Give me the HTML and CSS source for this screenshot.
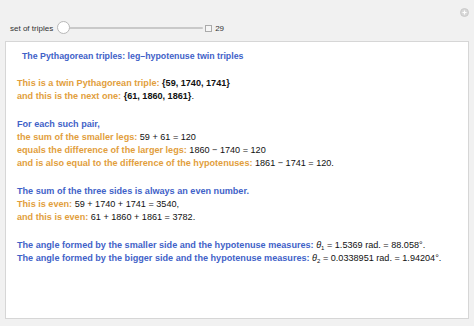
FILE: index.html
```html
<!DOCTYPE html>
<html lang="en">
<head>
    <meta charset="UTF-8">
    <title>Pythagorean Twin Triples</title>
    <link rel="stylesheet" href="styles.css">
</head>
<body>

    <div class="controls">
        <label class="control-label">set of triples</label>
        <div class="slider">
            <span class="slider-thumb"></span>
        </div>
        <span class="slider-box"></span>
        <span class="slider-value">29</span>
        <span class="plus-icon">
            <svg width="9" height="9" viewBox="0 0 9 9">
                <circle cx="4.5" cy="4.5" r="4" fill="#d8d8d8" stroke="#c4c4c4" stroke-width="0.8"/>
                <path d="M4.5 2.5v4M2.5 4.5h4" stroke="#ffffff" stroke-width="1.2"/>
            </svg>
        </span>
    </div>

    <div class="panel">
        <h2 class="title">The Pythagorean triples: leg–hypotenuse twin triples</h2>

        <div class="block">
            <p><span class="orange">This is a twin Pythagorean triple: </span><b>{59, 1740, 1741}</b></p>
            <p><span class="orange">and this is the next one: </span><b>{61, 1860, 1861}</b>.</p>
        </div>

        <div class="block">
            <p class="blue">For each such pair,</p>
            <p><span class="orange">the sum of the smaller legs: </span>59 + 61 = 120</p>
            <p><span class="orange">equals the difference of the larger legs: </span>1860 − 1740 = 120</p>
            <p><span class="orange">and is also equal to the difference of the hypotenuses: </span>1861 − 1741 = 120.</p>
        </div>

        <div class="block">
            <p class="blue">The sum of the three sides is always an even number.</p>
            <p><span class="orange">This is even: </span>59 + 1740 + 1741 = 3540,</p>
            <p><span class="orange">and this is even: </span>61 + 1860 + 1861 = 3782.</p>
        </div>

        <div class="block">
            <p><span class="blue">The angle formed by the smaller side and the hypotenuse measures: </span> <i>θ</i><sub>1</sub> = 1.5369 rad. = 88.058°.</p>
            <p><span class="blue">The angle formed by the bigger side and the hypotenuse measures: </span> <i>θ</i><sub>2</sub> = 0.0338951 rad. = 1.94204°.</p>
        </div>
    </div>

</body>
</html>
```

FILE: styles.css
```css
body {
    margin: 0;
    background-color: #f1f1f1;
    font-family: "Liberation Sans", Arial, sans-serif;
    width: 474px;
    height: 326px;
    overflow: hidden;
}

.controls {
    position: relative;
    height: 41px;
    display: flex;
    align-items: center;
    padding: 15px 0 0 10px;
    box-sizing: border-box;
}

.control-label {
    font-size: 8px;
    color: #333;
    margin-right: 8px;
}

.slider {
    position: relative;
    width: 142px;
    height: 2px;
    background-color: #c9c9c9;
    border-radius: 1px;
}

.slider-thumb {
    position: absolute;
    left: -4px;
    top: -6px;
    width: 13px;
    height: 13px;
    border-radius: 50%;
    background-color: #ffffff;
    border: 1px solid #b8b8b8;
    box-sizing: border-box;
}

.slider-box {
    width: 5px;
    height: 5px;
    border: 1px solid #aaa;
    background-color: #f6f6f6;
    margin-left: 2px;
}

.slider-value {
    font-size: 8px;
    color: #333;
    margin-left: 3px;
}

.plus-icon {
    position: absolute;
    right: 5px;
    top: 8px;
    line-height: 0;
}

.panel {
    margin: 0 5px;
    height: 278px;
    background-color: #ffffff;
    border: 1px solid #d6d6d6;
    box-sizing: border-box;
    padding: 8px 11px 0;
    font-size: 9.1px;
    color: #111;
}

.title {
    margin: 0 0 14px 5px;
    font-size: 8.8px;
    line-height: 13px;
    font-weight: bold;
    color: #3f62c8;
}

.block {
    margin-bottom: 15px;
}

.block p {
    margin: 0;
    line-height: 13px;
}

.orange {
    color: #e29e3c;
    font-weight: bold;
}

.blue {
    color: #3f62c8;
    font-weight: bold;
}

b {
    color: #111;
}

sub {
    font-size: 6px;
    vertical-align: -2px;
    line-height: 0;
}
```
